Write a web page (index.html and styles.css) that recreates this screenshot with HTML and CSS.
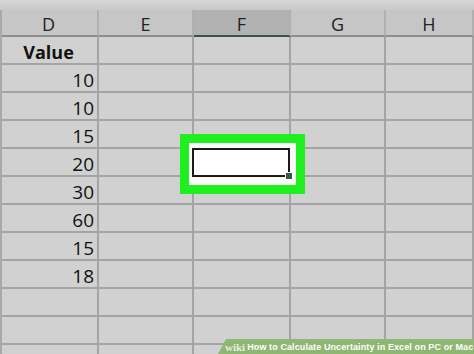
FILE: index.html
```html
<!DOCTYPE html>
<html lang="en">
<head>
    <meta charset="UTF-8">
    <meta name="viewport" content="width=device-width, initial-scale=1.0">
    <title>Uncertainty in Excel</title>
    <link rel="stylesheet" href="styles.css">
</head>
<body>
    <div class="screen">
        <div class="top-strip"></div>
        <div class="sheet">
            <div class="col-head">D</div>
            <div class="col-head">E</div>
            <div class="col-head selected">F</div>
            <div class="col-head">G</div>
            <div class="col-head">H</div>

            <div class="cell label">Value</div><div class="cell"></div><div class="cell"></div><div class="cell"></div><div class="cell"></div>
            <div class="cell num">10</div><div class="cell"></div><div class="cell"></div><div class="cell"></div><div class="cell"></div>
            <div class="cell num">10</div><div class="cell"></div><div class="cell"></div><div class="cell"></div><div class="cell"></div>
            <div class="cell num">15</div><div class="cell"></div><div class="cell"></div><div class="cell"></div><div class="cell"></div>
            <div class="cell num">20</div><div class="cell"></div><div class="cell"></div><div class="cell"></div><div class="cell"></div>
            <div class="cell num">30</div><div class="cell"></div><div class="cell"></div><div class="cell"></div><div class="cell"></div>
            <div class="cell num">60</div><div class="cell"></div><div class="cell"></div><div class="cell"></div><div class="cell"></div>
            <div class="cell num">15</div><div class="cell"></div><div class="cell"></div><div class="cell"></div><div class="cell"></div>
            <div class="cell num">18</div><div class="cell"></div><div class="cell"></div><div class="cell"></div><div class="cell"></div>
            <div class="cell"></div><div class="cell"></div><div class="cell"></div><div class="cell"></div><div class="cell"></div>
            <div class="cell"></div><div class="cell"></div><div class="cell"></div><div class="cell"></div><div class="cell"></div>
            <div class="cell"></div><div class="cell"></div><div class="cell"></div><div class="cell"></div><div class="cell"></div>
        </div>

        <!-- highlighted active cell F -->
        <div class="highlight">
            <div class="active-cell">
                <span class="fill-handle"></span>
            </div>
        </div>

        <div class="banner">
            <span class="wiki">wiki</span><span class="title">How to Calculate Uncertainty in Excel on PC or Mac</span>
        </div>
    </div>
</body>
</html>
```

FILE: styles.css
```css
body {
    margin: 0;
    font-family: "Open Sans", "Noto Sans", sans-serif;
    background-color: #d1d1d1;
}
.screen {
    position: relative;
    width: 474px;
    height: 354px;
    overflow: hidden;
    background-color: #d1d1d1;
}
.top-strip {
    height: 10px;
    background: linear-gradient(#d6d6d6, #c9c9c9);
}
.sheet {
    display: grid;
    grid-template-columns: 97px 95px 97px 95px 1fr;
    grid-template-rows: 27px;
    grid-auto-rows: 28px;
    border-left: 2px solid #a9a9a9;
}
.col-head {
    box-sizing: border-box;
    display: flex;
    align-items: center;
    justify-content: center;
    font-size: 18px;
    color: #222;
    background-color: #c6c6c6;
    border-right: 2px solid #b0b0b0;
    border-bottom: 2px solid #8e8e8e;
    padding-top: 2px;
}
.col-head.selected {
    background-color: #b2b2b2;
    border-bottom-color: #2f5a3f;
}
.col-head:first-child {
    padding-right: 2px;
}
.cell {
    box-sizing: border-box;
    display: flex;
    align-items: center;
    background-color: #d1d1d1;
    border-right: 2px solid #a4a4a4;
    border-bottom: 2px solid #a4a4a4;
    color: #111;
    font-size: 19px;
    padding-top: 3px;
}
.cell.label {
    justify-content: center;
    font-weight: bold;
    font-size: 18px;
    padding-right: 2px;
}
.cell.num {
    justify-content: flex-end;
    padding-right: 3px;
}
.highlight {
    position: absolute;
    left: 180px;
    top: 134px;
    width: 107px;
    height: 42px;
    border: 9px solid #1fee1f;
    background-color: #fafafa;
    display: flex;
    align-items: flex-start;
}
.active-cell {
    position: relative;
    box-sizing: border-box;
    margin: 5px 0 0 3px;
    width: 98px;
    height: 29px;
    border: 2px solid #1a1a1a;
    background-color: #ffffff;
}
.fill-handle {
    position: absolute;
    right: -5px;
    bottom: -5px;
    width: 6px;
    height: 6px;
    background-color: #2e5d45;
    border: 1px solid #ffffff;
}
.banner {
    position: absolute;
    left: 218px;
    right: 0;
    bottom: 0;
    height: 15px;
    padding-left: 7px;
    background-color: #8fb672;
    clip-path: polygon(8px 0, 100% 0, 100% 100%, 0 100%);
    display: flex;
    align-items: center;
    white-space: nowrap;
    font-family: "Liberation Sans", Arial, sans-serif;
    font-size: 9px;
    font-weight: bold;
    color: #ffffff;
}
.wiki {
    font-family: "Liberation Serif", serif;
    font-size: 11px;
    color: #e6efdc;
    margin-right: 2px;
}
.title {
    letter-spacing: 0.1px;
}
```
